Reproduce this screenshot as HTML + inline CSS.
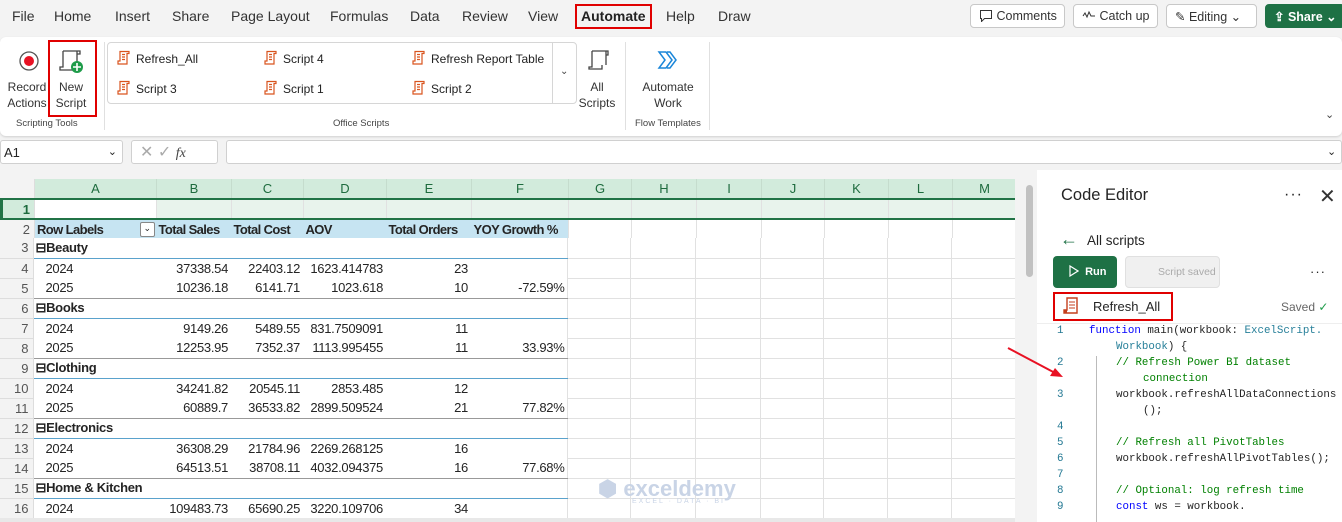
<!DOCTYPE html>
<html><head><meta charset="utf-8"><style>
*{box-sizing:border-box;margin:0;padding:0}
body{width:1342px;height:522px;overflow:hidden;background:#f3f3f3;font-family:"Liberation Sans",sans-serif;color:#242424;position:relative}
.a{position:absolute;white-space:nowrap}
.menu span{position:absolute;top:8px;font-size:14px;color:#333}
.btn{position:absolute;top:4px;height:24px;border:1px solid #c8c8c8;border-radius:4px;background:#fff;font-size:12.5px;padding:4px 0 0 8px;color:#333;white-space:nowrap;overflow:hidden}
.ribbon{position:absolute;left:0;top:37px;width:1342px;height:99px;background:#fff;border-radius:6px;box-shadow:0 1px 2px rgba(0,0,0,.15)}
.lbl{position:absolute;font-size:12px;color:#333;text-align:center;line-height:16px}
.grp{position:absolute;font-size:9.5px;color:#444;top:118px}
.sc{position:absolute;font-size:12px;color:#222}
.sc svg{position:absolute;left:-20px;top:-2px}
table{border-collapse:collapse;table-layout:fixed;position:absolute;left:0;top:179px;width:1015px;font-size:13px;letter-spacing:-0.3px}
td{height:20px;border-right:1px solid #e1e1e1;border-bottom:1px solid #e1e1e1;padding:0 2px;overflow:hidden;white-space:nowrap;background:#fff}
td.h{background:#d2ebdc;color:#1e6b3e;text-align:center;border-color:#c5dccd;font-size:13px;letter-spacing:0}
td.r{background:#f3f3f3;color:#555;text-align:right;padding-right:4px;font-size:13px;border-color:#ddd;letter-spacing:0}
.n{text-align:right}
.p td.x{border-right:none;border-bottom:none}
.code{position:absolute;left:1037px;top:323px;width:305px;font-family:"Liberation Mono",monospace;font-size:10.8px;line-height:16px}
.code div{height:16px;position:relative;white-space:pre}
.code .ln{position:absolute;left:20px;color:#237893}
.code .t{position:absolute;left:52px}
.kw{color:#0000ff}.ty{color:#267f99}.cm{color:#008000}
</style></head><body>
<div class="menu">
<span style="left:12px">File</span><span style="left:54px">Home</span><span style="left:115px">Insert</span><span style="left:172px">Share</span><span style="left:231px">Page Layout</span><span style="left:330px">Formulas</span><span style="left:410px">Data</span><span style="left:462px">Review</span><span style="left:528px">View</span>
<span style="left:581px;font-weight:bold;color:#222">Automate</span><span style="left:666px">Help</span><span style="left:718px">Draw</span>
</div>
<div class="a" style="left:575px;top:4px;width:77px;height:25px;border:2px solid #e00000"></div>
<div class="btn" style="left:970px;width:95px"><svg width="14" height="13" style="vertical-align:-2px"><path d="M1.5 1.5h11v8h-7l-3 3v-3h-1z" fill="none" stroke="#333"/></svg> Comments</div>
<div class="btn" style="left:1073px;width:85px"><svg width="14" height="10" style="vertical-align:0"><path d="M1 6l2-3 2 4 2-5 2 4h4" fill="none" stroke="#333"/></svg> Catch up</div>
<div class="btn" style="left:1166px;width:91px">✎ Editing ⌄</div>
<div class="btn" style="left:1265px;width:80px;background:#1e7145;border-color:#1e7145;color:#fff;font-weight:bold">⇪ Share ⌄</div>

<div class="ribbon"></div>
<svg class="a" style="left:18px;top:50px" width="22" height="22"><circle cx="11" cy="11" r="9" fill="#fff" stroke="#555" stroke-width="1.3"/><circle cx="11" cy="11" r="5" fill="#e81123"/></svg>
<div class="lbl" style="left:6px;top:79px;width:42px">Record<br>Actions</div>
<svg class="a" style="left:58px;top:47px" width="28" height="28"><path d="M5 4h14v14M5 4v16h-3v3h14v-5M19 4h3v3h-3" fill="none" stroke="#444" stroke-width="1.3"/><circle cx="19" cy="20" r="6" fill="#1f9c4a"/><path d="M19 16v8M15 20h8" stroke="#fff" stroke-width="1.6"/></svg>
<div class="lbl" style="left:52px;top:79px;width:38px">New<br>Script</div>
<div class="a" style="left:48px;top:40px;width:49px;height:77px;border:2px solid #e00000"></div>
<div class="grp" style="left:16px">Scripting Tools</div>
<div class="a" style="left:104px;top:42px;width:1px;height:88px;background:#e0e0e0"></div>
<div class="a" style="left:107px;top:42px;width:470px;height:62px;border:1px solid #d6d6d6;border-radius:4px"></div>
<div class="a" style="left:552px;top:42px;width:1px;height:62px;background:#d6d6d6"></div>
<div class="a" style="left:560px;top:66px;font-size:10px;color:#444">⌄</div>
<svg width="0" height="0" style="position:absolute"><defs><symbol id="s" viewBox="0 0 16 16"><path d="M4 1.5h9v2h-2v10.5H2v-3h2z M4 11v-9.5M6 4.5h3M6 7h3M6 9.5h3M13 1.5v2" fill="none" stroke="#d9541e" stroke-width="1.2"/></symbol></defs></svg>
<div class="sc" style="left:136px;top:52px"><svg width="16" height="16"><use href="#s"/></svg>Refresh_All</div>
<div class="sc" style="left:283px;top:52px"><svg width="16" height="16"><use href="#s"/></svg>Script 4</div>
<div class="sc" style="left:431px;top:52px"><svg width="16" height="16"><use href="#s"/></svg>Refresh Report Table</div>
<div class="sc" style="left:136px;top:82px"><svg width="16" height="16"><use href="#s"/></svg>Script 3</div>
<div class="sc" style="left:283px;top:82px"><svg width="16" height="16"><use href="#s"/></svg>Script 1</div>
<div class="sc" style="left:431px;top:82px"><svg width="16" height="16"><use href="#s"/></svg>Script 2</div>
<div class="grp" style="left:333px">Office Scripts</div>
<svg class="a" style="left:586px;top:48px" width="24" height="24"><path d="M6 3h14v14M6 3v16h-3v2h13v-4M20 3h2v4h-2" fill="none" stroke="#444" stroke-width="1.3"/></svg>
<div class="lbl" style="left:578px;top:79px;width:38px">All<br>Scripts</div>
<div class="a" style="left:625px;top:42px;width:1px;height:88px;background:#e0e0e0"></div>
<svg class="a" style="left:657px;top:50px" width="22" height="20"><path d="M2 2h7l6 8-6 8H2l6-8z M10 2h3l6 8-6 8h-3" fill="none" stroke="#1a86d9" stroke-width="1.5"/></svg>
<div class="lbl" style="left:636px;top:79px;width:64px">Automate<br>Work</div>
<div class="grp" style="left:635px">Flow Templates</div>
<div class="a" style="left:709px;top:42px;width:1px;height:88px;background:#e0e0e0"></div>
<div class="a" style="left:1325px;top:108px;font-size:11px;color:#444">⌄</div>

<div class="a" style="left:0;top:140px;width:123px;height:24px;background:#fff;border:1px solid #d0d0d0;border-radius:3px;font-size:13px;padding:4px 3px">A1<span style="position:absolute;right:5px;font-size:11px">⌄</span></div>
<div class="a" style="left:131px;top:140px;width:87px;height:24px;background:#fff;border:1px solid #d0d0d0;border-radius:3px;font-size:16px;color:#aaa;padding:1px 8px">✕ ✓ <i style="font-family:'Liberation Serif';color:#444;font-size:14px">fx</i></div>
<div class="a" style="left:226px;top:140px;width:1116px;height:24px;background:#fff;border:1px solid #d0d0d0;border-radius:3px"></div>
<div class="a" style="left:1327px;top:145px;font-size:11px">⌄</div>
<div class="a" style="left:0;top:168px;width:1037px;height:11px;background:#f3f3f3"></div>

<table>
<colgroup><col style="width:33px"><col style="width:122px"><col style="width:75px"><col style="width:72px"><col style="width:83px"><col style="width:85px"><col style="width:97px"><col style="width:63px"><col style="width:65px"><col style="width:65px"><col style="width:63px"><col style="width:64px"><col style="width:64px"><col style="width:64px"></colgroup>
<tr style="height:18px"><td class="r" style="height:18px;border-bottom:2px solid #217346"></td><td class="h" style="border-bottom:2px solid #217346">A</td><td class="h" style="border-bottom:2px solid #217346">B</td><td class="h" style="border-bottom:2px solid #217346">C</td><td class="h" style="border-bottom:2px solid #217346">D</td><td class="h" style="border-bottom:2px solid #217346">E</td><td class="h" style="border-bottom:2px solid #217346">F</td><td class="h" style="border-bottom:2px solid #217346">G</td><td class="h" style="border-bottom:2px solid #217346">H</td><td class="h" style="border-bottom:2px solid #217346">I</td><td class="h" style="border-bottom:2px solid #217346">J</td><td class="h" style="border-bottom:2px solid #217346">K</td><td class="h" style="border-bottom:2px solid #217346">L</td><td class="h" style="border-bottom:2px solid #217346">M</td></tr>
<tr><td class="r" style="background:#d2ebdc;color:#1e6b3e;font-weight:bold;border-left:3px solid #217346;border-bottom:2px solid #217346">1</td><td style="border-bottom:2px solid #217346"></td><td style="background:#e8f3ec;border-bottom:2px solid #217346"></td><td style="background:#e8f3ec;border-bottom:2px solid #217346"></td><td style="background:#e8f3ec;border-bottom:2px solid #217346"></td><td style="background:#e8f3ec;border-bottom:2px solid #217346"></td><td style="background:#e8f3ec;border-bottom:2px solid #217346"></td><td style="background:#e8f3ec;border-bottom:2px solid #217346"></td><td style="background:#e8f3ec;border-bottom:2px solid #217346"></td><td style="background:#e8f3ec;border-bottom:2px solid #217346"></td><td style="background:#e8f3ec;border-bottom:2px solid #217346"></td><td style="background:#e8f3ec;border-bottom:2px solid #217346"></td><td style="background:#e8f3ec;border-bottom:2px solid #217346"></td><td style="background:#e8f3ec;border-bottom:2px solid #217346"></td></tr>
<tr style="font-weight:bold;letter-spacing:-0.6px"><td class="r" style="font-weight:normal">2</td><td style="background:#c6e4f2;border:none;border-bottom:1px solid #5aa2cc;position:relative">Row Labels<span style="position:absolute;right:2px;top:2px;width:15px;height:15px;border:1px solid #888;border-radius:2px;background:#fff;font-size:9px;text-align:center;font-weight:normal">⌄</span></td><td style="background:#c6e4f2;border:none;border-bottom:1px solid #5aa2cc">Total Sales</td><td style="background:#c6e4f2;border:none;border-bottom:1px solid #5aa2cc">Total Cost</td><td style="background:#c6e4f2;border:none;border-bottom:1px solid #5aa2cc">AOV</td><td style="background:#c6e4f2;border:none;border-bottom:1px solid #5aa2cc">Total Orders</td><td style="background:#c6e4f2;border:none;border-bottom:1px solid #5aa2cc;border-right:1px solid #e1e1e1">YOY Growth %</td><td></td><td></td><td></td><td></td><td></td><td></td><td></td></tr>
</table>
<table style="top:238px">
<colgroup><col style="width:33px"><col style="width:122px"><col style="width:75px"><col style="width:72px"><col style="width:83px"><col style="width:85px"><col style="width:97px"><col style="width:63px"><col style="width:65px"><col style="width:65px"><col style="width:63px"><col style="width:64px"><col style="width:64px"><col style="width:64px"></colgroup>
<tbody class="p">
<tr><td class="r">3</td><td class="x" style="font-weight:bold;border-bottom:1px solid #5aa2cc">⊟Beauty</td><td class="x" style="border-bottom:1px solid #5aa2cc"></td><td class="x" style="border-bottom:1px solid #5aa2cc"></td><td class="x" style="border-bottom:1px solid #5aa2cc"></td><td class="x" style="border-bottom:1px solid #5aa2cc"></td><td style="border-bottom:1px solid #5aa2cc"></td><td></td><td></td><td></td><td></td><td></td><td></td><td></td></tr>
<tr><td class="r">4</td><td class="x" style="padding-left:12px">2024</td><td class="x n">37338.54</td><td class="x n">22403.12</td><td class="x n">1623.414783</td><td class="x n">23</td><td style="border-bottom:none"></td><td></td><td></td><td></td><td></td><td></td><td></td><td></td></tr>
<tr><td class="r">5</td><td class="x" style="padding-left:12px;border-bottom:1px solid #999">2025</td><td class="x n" style="border-bottom:1px solid #999">10236.18</td><td class="x n" style="border-bottom:1px solid #999">6141.71</td><td class="x n" style="border-bottom:1px solid #999">1023.618</td><td class="x n" style="border-bottom:1px solid #999">10</td><td class="n" style="border-bottom:1px solid #999">-72.59%</td><td></td><td></td><td></td><td></td><td></td><td></td><td></td></tr>
<tr><td class="r">6</td><td class="x" style="font-weight:bold;border-bottom:1px solid #5aa2cc">⊟Books</td><td class="x" style="border-bottom:1px solid #5aa2cc"></td><td class="x" style="border-bottom:1px solid #5aa2cc"></td><td class="x" style="border-bottom:1px solid #5aa2cc"></td><td class="x" style="border-bottom:1px solid #5aa2cc"></td><td style="border-bottom:1px solid #5aa2cc"></td><td></td><td></td><td></td><td></td><td></td><td></td><td></td></tr>
<tr><td class="r">7</td><td class="x" style="padding-left:12px">2024</td><td class="x n">9149.26</td><td class="x n">5489.55</td><td class="x n">831.7509091</td><td class="x n">11</td><td style="border-bottom:none"></td><td></td><td></td><td></td><td></td><td></td><td></td><td></td></tr>
<tr><td class="r">8</td><td class="x" style="padding-left:12px;border-bottom:1px solid #999">2025</td><td class="x n" style="border-bottom:1px solid #999">12253.95</td><td class="x n" style="border-bottom:1px solid #999">7352.37</td><td class="x n" style="border-bottom:1px solid #999">1113.995455</td><td class="x n" style="border-bottom:1px solid #999">11</td><td class="n" style="border-bottom:1px solid #999">33.93%</td><td></td><td></td><td></td><td></td><td></td><td></td><td></td></tr>
<tr><td class="r">9</td><td class="x" style="font-weight:bold;border-bottom:1px solid #5aa2cc">⊟Clothing</td><td class="x" style="border-bottom:1px solid #5aa2cc"></td><td class="x" style="border-bottom:1px solid #5aa2cc"></td><td class="x" style="border-bottom:1px solid #5aa2cc"></td><td class="x" style="border-bottom:1px solid #5aa2cc"></td><td style="border-bottom:1px solid #5aa2cc"></td><td></td><td></td><td></td><td></td><td></td><td></td><td></td></tr>
<tr><td class="r">10</td><td class="x" style="padding-left:12px">2024</td><td class="x n">34241.82</td><td class="x n">20545.11</td><td class="x n">2853.485</td><td class="x n">12</td><td style="border-bottom:none"></td><td></td><td></td><td></td><td></td><td></td><td></td><td></td></tr>
<tr><td class="r">11</td><td class="x" style="padding-left:12px;border-bottom:1px solid #999">2025</td><td class="x n" style="border-bottom:1px solid #999">60889.7</td><td class="x n" style="border-bottom:1px solid #999">36533.82</td><td class="x n" style="border-bottom:1px solid #999">2899.509524</td><td class="x n" style="border-bottom:1px solid #999">21</td><td class="n" style="border-bottom:1px solid #999">77.82%</td><td></td><td></td><td></td><td></td><td></td><td></td><td></td></tr>
<tr><td class="r">12</td><td class="x" style="font-weight:bold;border-bottom:1px solid #5aa2cc">⊟Electronics</td><td class="x" style="border-bottom:1px solid #5aa2cc"></td><td class="x" style="border-bottom:1px solid #5aa2cc"></td><td class="x" style="border-bottom:1px solid #5aa2cc"></td><td class="x" style="border-bottom:1px solid #5aa2cc"></td><td style="border-bottom:1px solid #5aa2cc"></td><td></td><td></td><td></td><td></td><td></td><td></td><td></td></tr>
<tr><td class="r">13</td><td class="x" style="padding-left:12px">2024</td><td class="x n">36308.29</td><td class="x n">21784.96</td><td class="x n">2269.268125</td><td class="x n">16</td><td style="border-bottom:none"></td><td></td><td></td><td></td><td></td><td></td><td></td><td></td></tr>
<tr><td class="r">14</td><td class="x" style="padding-left:12px;border-bottom:1px solid #999">2025</td><td class="x n" style="border-bottom:1px solid #999">64513.51</td><td class="x n" style="border-bottom:1px solid #999">38708.11</td><td class="x n" style="border-bottom:1px solid #999">4032.094375</td><td class="x n" style="border-bottom:1px solid #999">16</td><td class="n" style="border-bottom:1px solid #999">77.68%</td><td></td><td></td><td></td><td></td><td></td><td></td><td></td></tr>
<tr><td class="r">15</td><td class="x" style="font-weight:bold;border-bottom:1px solid #5aa2cc">⊟Home &amp; Kitchen</td><td class="x" style="border-bottom:1px solid #5aa2cc"></td><td class="x" style="border-bottom:1px solid #5aa2cc"></td><td class="x" style="border-bottom:1px solid #5aa2cc"></td><td class="x" style="border-bottom:1px solid #5aa2cc"></td><td style="border-bottom:1px solid #5aa2cc"></td><td></td><td></td><td></td><td></td><td></td><td></td><td></td></tr>
<tr><td class="r">16</td><td class="x" style="padding-left:12px">2024</td><td class="x n">109483.73</td><td class="x n">65690.25</td><td class="x n">3220.109706</td><td class="x n">34</td><td style="border-bottom:none"></td><td></td><td></td><td></td><td></td><td></td><td></td><td></td></tr>
</tbody></table>
<div class="a" style="left:0;top:518px;width:1037px;height:4px;background:#e8e8e8"></div>
<div class="a" style="left:1015px;top:179px;width:22px;height:343px;background:#f3f3f3"></div>
<div class="a" style="left:1026px;top:185px;width:7px;height:92px;background:#c1c1c1;border-radius:4px"></div>
<div class="a" style="left:598px;top:476px;font-size:22px;color:#c9d4e6;font-weight:bold">⬢ exceldemy</div>
<div class="a" style="left:632px;top:498px;font-size:7px;color:#c9d4e6;letter-spacing:2px">EXCEL · DATA · BI</div>

<div class="a" style="left:1037px;top:170px;width:305px;height:352px;background:#fff"></div>
<div class="a" style="left:1061px;top:186px;font-size:16.5px;color:#242424">Code Editor</div>
<div class="a" style="left:1284px;top:186px;font-size:16px;letter-spacing:1px">···</div>
<div class="a" style="left:1319px;top:184px;font-size:20px;color:#333">✕</div>
<div class="a" style="left:1060px;top:229px;font-size:18px;color:#1e7145">←</div>
<div class="a" style="left:1087px;top:233px;font-size:13.5px">All scripts</div>
<div class="a" style="left:1053px;top:256px;width:64px;height:32px;background:#1e7145;border-radius:4px;color:#fff;font-size:11px;font-weight:bold;padding:9px 0 0 16px"><svg width="10" height="12" style="vertical-align:-2px"><path d="M1 1l8 5-8 5z" fill="none" stroke="#fff" stroke-width="1.2"/></svg>&nbsp; Run</div>
<div class="a" style="left:1125px;top:256px;width:95px;height:32px;background:#f0f0f0;border:1px solid #e0e0e0;border-radius:4px;color:#aaa;font-size:10.5px;padding:9px 0 0 32px">Script saved</div>
<div class="a" style="left:1310px;top:264px;font-size:13px;letter-spacing:1px">···</div>
<div class="a" style="left:1053px;top:292px;width:120px;height:29px;border:2px solid #e00000"></div>
<svg class="a" style="left:1063px;top:297px" width="16" height="18"><path d="M4 1h10v15H1v-3h3z" fill="#fff" stroke="#c43e1c" stroke-width="1.4"/><path d="M6 5h6M6 8h6M6 11h6" stroke="#c43e1c"/><path d="M1 13h3v3H1z" fill="#c43e1c"/></svg>
<div class="a" style="left:1093px;top:299px;font-size:13px">Refresh_All</div>
<div class="a" style="left:1281px;top:300px;font-size:12px;color:#666">Saved <span style="color:#1e9c4a">✓</span></div>
<div class="a" style="left:1037px;top:323px;width:305px;height:1px;background:#eee"></div>
<div class="a" style="left:1096px;top:356px;width:1px;height:166px;background:#bbb"></div>
<svg class="a" style="left:1005px;top:345px" width="60" height="35"><path d="M3 3L52 29" stroke="#e81123" stroke-width="2"/><path d="M58 32l-13-1 5-8z" fill="#e81123"/></svg>
<div class="code">
<div><span class="ln">1</span><span class="t"><span class="kw">function</span> main(workbook: <span class="ty">ExcelScript.</span></span></div>
<div><span class="t" style="left:79px"><span class="ty">Workbook</span>) {</span></div>
<div><span class="ln">2</span><span class="t" style="left:79px"><span class="cm">// Refresh Power BI dataset</span></span></div>
<div><span class="t" style="left:106px"><span class="cm">connection</span></span></div>
<div><span class="ln">3</span><span class="t" style="left:79px">workbook.refreshAllDataConnections</span></div>
<div><span class="t" style="left:106px">();</span></div>
<div><span class="ln">4</span></div>
<div><span class="ln">5</span><span class="t" style="left:79px"><span class="cm">// Refresh all PivotTables</span></span></div>
<div><span class="ln">6</span><span class="t" style="left:79px">workbook.refreshAllPivotTables();</span></div>
<div><span class="ln">7</span></div>
<div><span class="ln">8</span><span class="t" style="left:79px"><span class="cm">// Optional: log refresh time</span></span></div>
<div><span class="ln">9</span><span class="t" style="left:79px"><span class="kw">const</span> ws = workbook.</span></div>
</div>
</body></html>
